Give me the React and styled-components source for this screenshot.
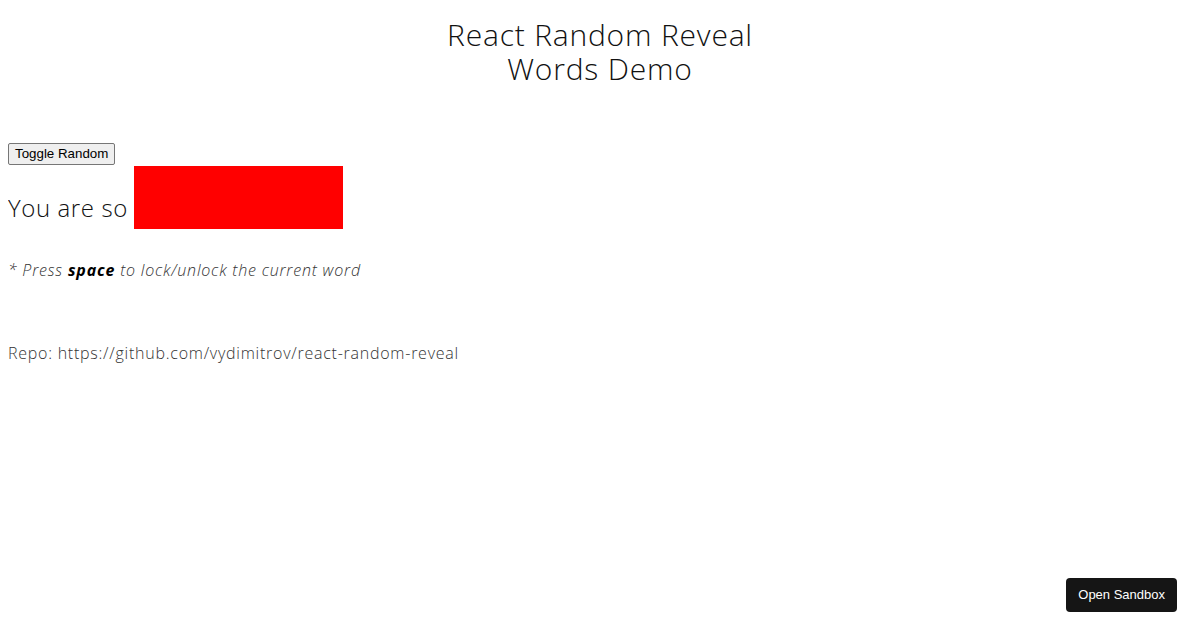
import React, { useState } from 'react';
import styled, { createGlobalStyle } from 'styled-components';

const GlobalStyle = createGlobalStyle`
  body {
    margin: 8px;
    background: #fff;
    font-family: 'Open Sans', 'Liberation Sans', sans-serif;
    font-weight: 300;
    color: #222;
  }
`;

const Title = styled.h1`
  margin: 10px 0 0;
  text-align: center;
  font-size: 30px;
  line-height: 34px;
  font-weight: 300;
  letter-spacing: 0.8px;
  color: #111;
`;

const Demo = styled.div`
  margin-top: 55px;
`;

const ToggleButton = styled.button`
  font-family: 'Liberation Sans', Arial, sans-serif;
  font-size: 13.33px;
  line-height: 15px;
  padding: 2px 6px 3px;
  border: 1px solid #767676;
  border-radius: 2px;
  background: #efefef;
  color: #000;
`;

const Sentence = styled.div`
  font-size: 24px;
  line-height: 28px;
  margin-top: 1px;
  letter-spacing: 0.6px;
  color: #111;
`;

const Hidden = styled.span`
  display: inline-block;
  width: 209px;
  height: 63px;
  margin-left: 6px;
  background: ${p => p.color};
  vertical-align: -12px;
`;

const Note = styled.p`
  margin: 30px 0 0;
  font-size: 16px;
  font-style: italic;
  letter-spacing: 0.8px;
  color: #333;

  b {
    font-weight: 700;
    color: #000;
  }
`;

const Repo = styled.p`
  margin: 61px 0 0;
  font-size: 16px;
  letter-spacing: 0.75px;
  color: #333;
`;

const SandboxButton = styled.a`
  position: fixed;
  right: 23px;
  bottom: 18px;
  padding: 9px 12px;
  background: #151515;
  color: #fff;
  border-radius: 4px;
  font-family: 'Liberation Sans', Arial, sans-serif;
  font-size: 13px;
  font-weight: 400;
  line-height: 16px;
  text-decoration: none;
`;

export default function App() {
  const [random, setRandom] = useState(true);
  return (
    <>
      <GlobalStyle />
      <Title>
        React Random Reveal
        <br />
        Words Demo
      </Title>
      <Demo>
        <ToggleButton onClick={() => setRandom(!random)}>Toggle Random</ToggleButton>
        <Sentence>
          You are so<Hidden color="#ff0000" />
        </Sentence>
        <Note>
          * Press <b>space</b> to lock/unlock the current word
        </Note>
        <Repo>Repo: https://github.com/vydimitrov/react-random-reveal</Repo>
      </Demo>
      <SandboxButton href="#">Open Sandbox</SandboxButton>
    </>
  );
}
